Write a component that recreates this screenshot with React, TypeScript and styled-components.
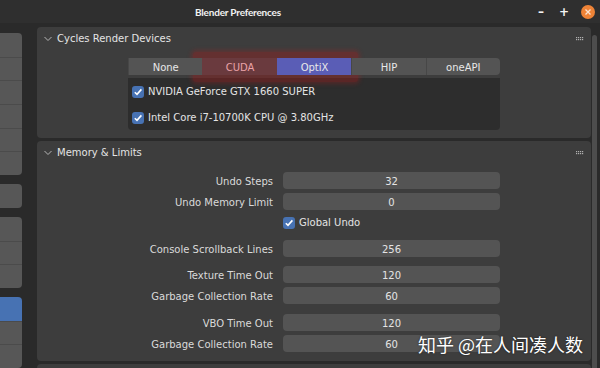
import React from "react";
import styled, { createGlobalStyle } from "styled-components";

const GlobalStyle = createGlobalStyle`
  html, body {
    margin: 0;
    padding: 0;
    background: #2a2a2a;
    overflow: hidden;
  }
  * {
    box-sizing: border-box;
  }
`;

const colors = {
  window: "#2a2a2a",
  titleBar: "#2f2f2f",
  panel: "#3d3d3d",
  field: "#545454",
  list: "#2d2d2d",
  text: "#e4e4e4",
  label: "#dadada",
  blue: "#4772b3",
};

const Window = styled.div`
  position: relative;
  width: 600px;
  height: 368px;
  background: ${colors.window};
  font-family: "DejaVu Sans", sans-serif;
  font-size: 10px;
  color: ${colors.text};
  display: flex;
  flex-direction: column;
  overflow: hidden;
`;

const TitleBar = styled.div`
  height: 23px;
  background: ${colors.titleBar};
  display: flex;
  align-items: center;
  padding-left: 195px;
  padding-right: 5px;
  flex-shrink: 0;
`;

const Title = styled.div`
  font-family: Lato, sans-serif;
  font-weight: 700;
  font-size: 10px;
  letter-spacing: -0.2px;
  color: #f2f2f2;
`;

const WinButtons = styled.div`
  margin-left: auto;
  display: flex;
  align-items: center;
  gap: 7px;
`;

const WinButton = styled.div`
  width: 16px;
  height: 16px;
  display: flex;
  align-items: center;
  justify-content: center;
  color: #f4f4f4;
  font-family: "DejaVu Sans", sans-serif;
  font-weight: 700;
  font-size: 12px;
`;

const CloseButton = styled.div`
  width: 14px;
  height: 14px;
  margin-left: 2px;
  border-radius: 50%;
  background: #ee8337;
  display: flex;
  align-items: center;
  justify-content: center;
`;

const Body = styled.div`
  flex: 1;
  display: flex;
  min-height: 0;
`;

const Sidebar = styled.div`
  width: 22px;
  padding-top: 10px;
  display: flex;
  flex-direction: column;
  gap: 9px;
  flex-shrink: 0;
`;

const NavGroup = styled.div`
  display: flex;
  flex-direction: column;
  border-radius: 0 4px 4px 0;
  overflow: hidden;
`;

const NavItem = styled.div<{ $active?: boolean }>`
  height: 24px;
  background: ${(p) => (p.$active ? colors.blue : "#575757")};
  border-top: 1px solid ${(p) => (p.$active ? colors.blue : "#4b4b4b")};
  &:first-child {
    border-top: 0;
  }
`;

const Region = styled.div`
  flex: 1;
  display: flex;
  margin-left: 15px;
  padding-top: 4px;
  padding-right: 3px;
  gap: 1px;
  min-width: 0;
`;

const PanelStack = styled.div`
  flex: 1;
  display: flex;
  flex-direction: column;
  gap: 3px;
`;

const ScrollBar = styled.div`
  width: 5px;
  margin-top: 8px;
  background: #4d4d4d;
  border-radius: 3px 3px 0 0;
`;

const Panel = styled.div<{ $stub?: boolean }>`
  background: ${colors.panel};
  border-radius: 4px;
  flex-shrink: 0;
  height: ${(p) => (p.$stub ? "20px" : "auto")};
`;

const PanelHeader = styled.div`
  height: 22px;
  display: flex;
  align-items: center;
  padding: 1px 7px 0;
  gap: 5px;
  color: ${colors.text};
  font-size: 10px;
`;

const Grip = styled.svg`
  margin-left: auto;
`;

const PanelBody = styled.div<{ $bottom?: number }>`
  padding: 9px 0 ${(p) => p.$bottom ?? 8}px 91px;
`;

const TabStrip = styled.div`
  position: relative;
  width: 372px;
  height: 17px;
  display: flex;
`;

const Highlight = styled.div`
  position: absolute;
  left: 65px;
  top: -6px;
  width: 165px;
  height: 30px;
  border-radius: 3px;
  background: rgba(165, 30, 30, 0.38);
  box-shadow: 0 0 4px 2px rgba(165, 30, 30, 0.32);
`;

type TabKind = "normal" | "flagged" | "active";

const Tab = styled.div<{ $kind: TabKind }>`
  position: relative;
  flex: 1;
  display: flex;
  align-items: center;
  justify-content: center;
  padding-top: 1px;
  background: ${(p) =>
    p.$kind === "active" ? "#5a5db6" : p.$kind === "flagged" ? "#6a3a3e" : colors.field};
  color: ${(p) => (p.$kind === "flagged" ? "#eba2a8" : "#e8e8e8")};
  border-left: 1px solid ${(p) => (p.$kind === "normal" ? "#474747" : "transparent")};
  &:first-child {
    border-left: 0;
    border-radius: 4px 0 0 4px;
  }
  &:last-child {
    border-radius: 0 4px 4px 0;
  }
`;

const DeviceList = styled.div`
  width: 372px;
  margin-top: 3px;
  background: ${colors.list};
  border-radius: 0 0 4px 4px;
  display: flex;
  flex-direction: column;
`;

const DeviceRow = styled.div`
  height: 26px;
  display: flex;
  align-items: center;
  padding: 1px 0 0 4px;
  gap: 4px;
`;

const Box = styled.div`
  width: 12px;
  height: 12px;
  border-radius: 3px;
  background: ${colors.blue};
  display: flex;
  align-items: center;
  justify-content: center;
  flex-shrink: 0;
`;

const Settings = styled.div`
  display: flex;
  flex-direction: column;
  gap: 4px;
  margin-left: -91px;
`;

const Group = styled.div<{ $space?: number }>`
  display: flex;
  flex-direction: column;
  gap: 4px;
  margin-top: ${(p) => p.$space ?? 0}px;
`;

const Row = styled.div`
  display: grid;
  grid-template-columns: 236px 217px;
  column-gap: 10px;
  height: 17px;
  align-items: center;
`;

const Label = styled.div`
  text-align: right;
  color: ${colors.label};
  padding-top: 1px;
`;

const Field = styled.div`
  height: 17px;
  background: ${colors.field};
  border-radius: 4px;
  display: flex;
  align-items: center;
  justify-content: center;
  padding-top: 1px;
  color: ${colors.text};
`;

const CheckField = styled.div`
  display: flex;
  align-items: center;
  gap: 4px;
`;

const Watermark = styled.div`
  position: absolute;
  right: 17px;
  bottom: 15px;
  font-family: "Noto Sans CJK SC", sans-serif;
  font-size: 18px;
  line-height: 1;
  color: #ffffff;
  text-shadow: 0 0 2px rgba(0, 0, 0, 0.6);
  white-space: pre;
`;

function Chevron() {
  return (
    <svg width="8" height="6" viewBox="0 0 8 6">
      <path d="M0.5 1 L4 4.5 L7.5 1" fill="none" stroke="#b5b5b5" strokeWidth="1" />
    </svg>
  );
}

function GripIcon() {
  const dots = [];
  for (let r = 0; r < 2; r++) {
    for (let c = 0; c < 4; c++) {
      dots.push(<rect key={`${r}-${c}`} x={c * 2} y={r * 2} width="1.2" height="1.2" fill="#b0b0b0" />);
    }
  }
  return (
    <Grip width="8" height="4" viewBox="0 0 8 4">
      {dots}
    </Grip>
  );
}

function Check() {
  return (
    <Box>
      <svg width="10" height="10" viewBox="0 0 10 10">
        <path d="M1.8 5.2 L4 7.4 L8.4 2.4" fill="none" stroke="#ffffff" strokeWidth="1.6" />
      </svg>
    </Box>
  );
}

const tabs: { name: string; kind: TabKind }[] = [
  { name: "None", kind: "normal" },
  { name: "CUDA", kind: "flagged" },
  { name: "OptiX", kind: "active" },
  { name: "HIP", kind: "normal" },
  { name: "oneAPI", kind: "normal" },
];

const devices = ["NVIDIA GeForce GTX 1660 SUPER", "Intel Core i7-10700K CPU @ 3.80GHz"];

const groups: { space?: number; rows: { label?: string; value?: string; check?: string }[] }[] = [
  {
    rows: [
      { label: "Undo Steps", value: "32" },
      { label: "Undo Memory Limit", value: "0" },
      { check: "Global Undo" },
    ],
  },
  { space: 5, rows: [{ label: "Console Scrollback Lines", value: "256" }] },
  {
    space: 5,
    rows: [
      { label: "Texture Time Out", value: "120" },
      { label: "Garbage Collection Rate", value: "60" },
    ],
  },
  {
    space: 6,
    rows: [
      { label: "VBO Time Out", value: "120" },
      { label: "Garbage Collection Rate", value: "60" },
    ],
  },
];

export default function App() {
  const navGroups = [6, 1, 3, 3];
  return (
    <Window>
      <GlobalStyle />
      <TitleBar>
        <Title>Blender Preferences</Title>
        <WinButtons>
          <WinButton>–</WinButton>
          <WinButton>+</WinButton>
          <CloseButton>
            <svg width="8" height="8" viewBox="0 0 8 8">
              <path d="M1.5 1.5 L6.5 6.5 M6.5 1.5 L1.5 6.5" stroke="#fbe3d0" strokeWidth="1.3" />
            </svg>
          </CloseButton>
        </WinButtons>
      </TitleBar>
      <Body>
        <Sidebar>
          {navGroups.map((count, g) => (
            <NavGroup key={g}>
              {Array.from({ length: count }).map((_, i) => (
                <NavItem key={i} $active={g === 3 && i === 0} />
              ))}
            </NavGroup>
          ))}
        </Sidebar>
        <Region>
          <PanelStack>
            <Panel>
              <PanelHeader>
                <Chevron />
                <span>Cycles Render Devices</span>
                <GripIcon />
              </PanelHeader>
              <PanelBody>
                <TabStrip>
                  <Highlight />
                  {tabs.map((t) => (
                    <Tab key={t.name} $kind={t.kind}>
                      {t.name}
                    </Tab>
                  ))}
                </TabStrip>
                <DeviceList>
                  {devices.map((d) => (
                    <DeviceRow key={d}>
                      <Check />
                      <span>{d}</span>
                    </DeviceRow>
                  ))}
                </DeviceList>
              </PanelBody>
            </Panel>
            <Panel>
              <PanelHeader>
                <Chevron />
                <span>Memory &amp; Limits</span>
                <GripIcon />
              </PanelHeader>
              <PanelBody $bottom={9}>
                <Settings>
                  {groups.map((g, gi) => (
                    <Group key={gi} $space={g.space}>
                      {g.rows.map((r, ri) =>
                        r.check ? (
                          <Row key={ri}>
                            <span />
                            <CheckField>
                              <Check />
                              <span>{r.check}</span>
                            </CheckField>
                          </Row>
                        ) : (
                          <Row key={ri}>
                            <Label>{r.label}</Label>
                            <Field>{r.value}</Field>
                          </Row>
                        )
                      )}
                    </Group>
                  ))}
                </Settings>
              </PanelBody>
            </Panel>
            <Panel $stub />
          </PanelStack>
          <ScrollBar />
        </Region>
      </Body>
      <Watermark>知乎 @在人间凑人数</Watermark>
    </Window>
  );
}
